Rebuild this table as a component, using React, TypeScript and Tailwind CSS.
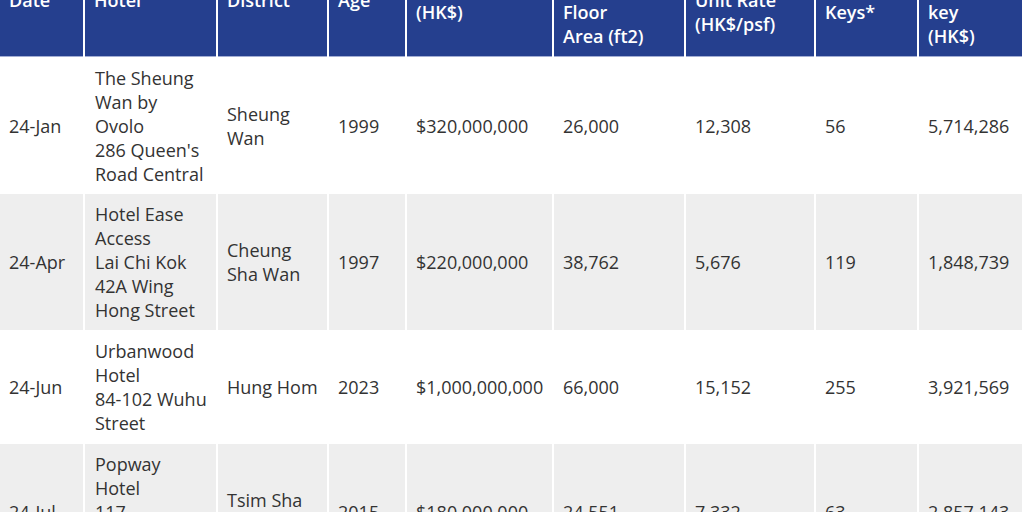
const columns = [
  ['Date'],
  ['Hotel'],
  ['District'],
  ['Age'],
  ['Consideration', '(HK$)'],
  ['Total', 'Gross', 'Floor', 'Area (ft2)'],
  ['Average', 'Unit Rate', '(HK$/psf)'],
  ['No. of', 'Keys*'],
  ['Price', 'per', 'key', '(HK$)'],
]

const rows = [
  {
    date: '24-Jan',
    hotel: ['The Sheung', 'Wan by', 'Ovolo', "286 Queen's", 'Road Central'],
    district: ['Sheung', 'Wan'],
    age: '1999',
    price: '$320,000,000',
    area: '26,000',
    rate: '12,308',
    keys: '56',
    perKey: '5,714,286',
  },
  {
    date: '24-Apr',
    hotel: ['Hotel Ease', 'Access', 'Lai Chi Kok', '42A Wing', 'Hong Street'],
    district: ['Cheung', 'Sha Wan'],
    age: '1997',
    price: '$220,000,000',
    area: '38,762',
    rate: '5,676',
    keys: '119',
    perKey: '1,848,739',
  },
  {
    date: '24-Jun',
    hotel: ['Urbanwood', 'Hotel', '84-102 Wuhu', 'Street'],
    district: ['Hung Hom'],
    age: '2023',
    price: '$1,000,000,000',
    area: '66,000',
    rate: '15,152',
    keys: '255',
    perKey: '3,921,569',
  },
  {
    date: '24-Jul',
    hotel: ['Popway', 'Hotel', '117', 'Chatham', 'Road South'],
    district: ['Tsim Sha', 'Tsui'],
    age: '2015',
    price: '$180,000,000',
    area: '24,551',
    rate: '7,332',
    keys: '63',
    perKey: '2,857,143',
  },
]

const Lines = ({ lines }: { lines: string[] }) => (
  <div>
    {lines.map((l, i) => (
      <span key={i} className="block whitespace-nowrap">
        {l}
      </span>
    ))}
  </div>
)

export default function App() {
  return (
    <div className="w-[1024px] h-[512px] overflow-hidden bg-white font-['Open_Sans',sans-serif] text-[18px] leading-6">
      <div className="-mt-[56px] grid grid-cols-[83px_131px_109px_76px_145px_130px_128px_101px_103px] gap-x-[2px] gap-y-px">
        {/* header */}
        {columns.map((col, i) => (
          <div
            key={i}
            className="flex items-center bg-[#253f8e] border-b border-[#a3aed4] pl-[9px] pr-[6px] py-2 text-white font-semibold"
          >
            <Lines lines={col} />
          </div>
        ))}

        {/* body */}
        {rows.map((r, i) => {
          const bg = i % 2 === 0 ? 'bg-white' : 'bg-[#eeeeee]'
          const pad = i === 0 ? 'pt-2 pb-[7px]' : 'py-2'
          const cell = `flex items-center ${bg} ${pad} pl-[9px] pr-[6px] text-[#333333] whitespace-nowrap`
          return [
            <div key={`${i}-date`} className={cell}>{r.date}</div>,
            <div key={`${i}-hotel`} className={`${cell} pl-[10px]`}><Lines lines={r.hotel} /></div>,
            <div key={`${i}-district`} className={cell}><Lines lines={r.district} /></div>,
            <div key={`${i}-age`} className={cell}>{r.age}</div>,
            <div key={`${i}-price`} className={cell}>{r.price}</div>,
            <div key={`${i}-area`} className={cell}>{r.area}</div>,
            <div key={`${i}-rate`} className={cell}>{r.rate}</div>,
            <div key={`${i}-keys`} className={cell}>{r.keys}</div>,
            <div key={`${i}-perkey`} className={cell}>{r.perKey}</div>,
          ]
        })}
      </div>
    </div>
  )
}
